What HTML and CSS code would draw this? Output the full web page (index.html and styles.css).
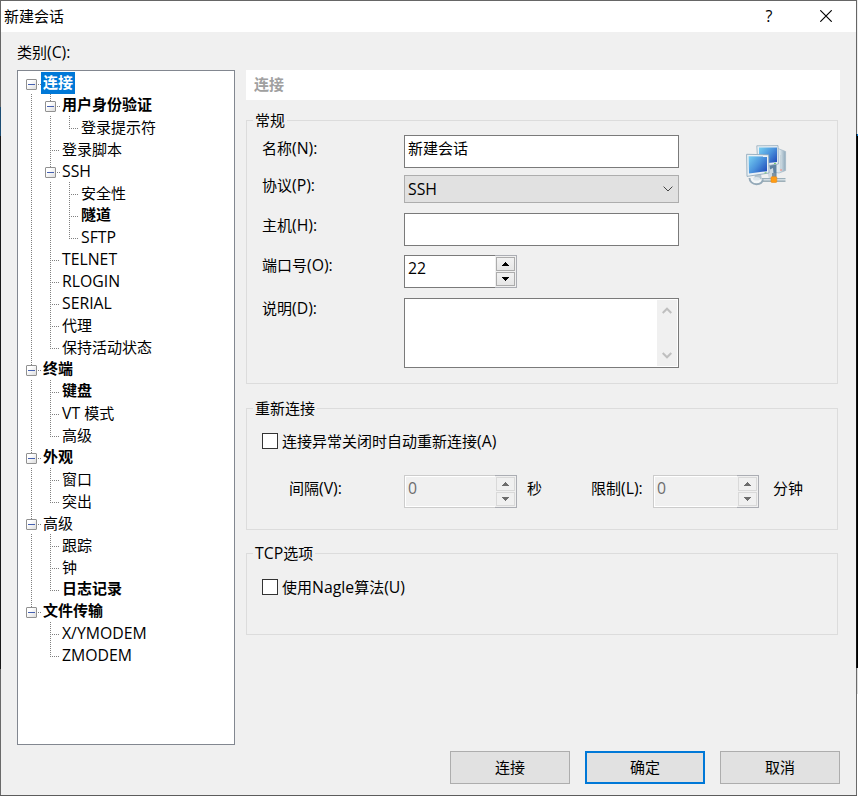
FILE: index.html
```html
<!DOCTYPE html>
<html lang="zh-CN">
<head>
<meta charset="utf-8">
<title>新建会话</title>
<link rel="stylesheet" href="styles.css">
</head>
<body>
<div class="frame">
<div class="window">
  <header class="titlebar">
    <span class="title">新建会话</span>
    <span class="help">?</span>
    <svg class="close" width="12" height="12" viewBox="0 0 12 12"><path d="M0.3 0.3L11.7 11.7M11.7 0.3L0.3 11.7" stroke="#000" stroke-width="1.15" fill="none"/></svg>
  </header>
  <div class="content">
    <aside class="side">
      <div class="caption">类别<span class="lat">(C):</span></div>
      <div class="tree" id="tree"></div>
    </aside>
    <main class="main">
      <h1 class="page-title">连接</h1>
      <section class="group general">
        <h2>常规</h2>
        <div class="form">
          <div class="row r-name"><label>名称<span class="lat">(N):</span></label><div class="input">新建会话</div></div>
          <div class="row r-proto"><label>协议<span class="lat">(P):</span></label><div class="select"><span class="lat">SSH</span><svg width="10" height="6" viewBox="0 0 10 6"><path d="M0.6 0.6L5 5L9.4 0.6" stroke="#444" stroke-width="1" fill="none"/></svg></div></div>
          <div class="row r-host"><label>主机<span class="lat">(H):</span></label><div class="input"></div></div>
          <div class="row r-port"><label>端口号<span class="lat">(O):</span></label>
            <div class="spin"><span class="val lat">22</span><span class="btns"><i><svg width="7" height="4"><path d="M3 0h1v1h1v1h1v1h1v1H0V3h1V2h1V1h1z"/></svg></i><i><svg width="7" height="4"><path d="M0 0h7v1H6v1H5v1H4v1H3V3H2V2H1V1H0z"/></svg></i></span></div></div>
          <div class="row r-desc"><label>说明<span class="lat">(D):</span></label>
            <div class="textarea"><div class="scroll">
              <svg width="10" height="7" viewBox="0 0 10 7"><path d="M0.7 6L5 1.7L9.3 6" stroke="#bfbfbf" stroke-width="2" fill="none"/></svg>
              <svg width="10" height="7" viewBox="0 0 10 7"><path d="M0.7 1L5 5.3L9.3 1" stroke="#bfbfbf" stroke-width="2" fill="none"/></svg>
            </div></div></div>
        </div>
        <svg class="net-icon" width="42" height="42" viewBox="0 0 42 42">
          <defs>
            <linearGradient id="scr" x1="0" y1="0.1" x2="1" y2="0.9"><stop offset="0" stop-color="#74cbf0"/><stop offset="0.5" stop-color="#4a92dc"/><stop offset="1" stop-color="#1f49b8"/></linearGradient>
            <linearGradient id="tower" x1="0" y1="0" x2="1" y2="0"><stop offset="0" stop-color="#f4f8fa"/><stop offset="0.55" stop-color="#d9e4ea"/><stop offset="1" stop-color="#8fa9bb"/></linearGradient>
            <linearGradient id="pipe" x1="0" y1="0" x2="0" y2="1"><stop offset="0" stop-color="#8199a6"/><stop offset="0.45" stop-color="#dfe8ec"/><stop offset="1" stop-color="#748d9a"/></linearGradient>
          </defs>
          <path d="M32 3.5L39.6 6.5V25.5L33 28L27 27V5z" fill="url(#tower)" stroke="#a3b8c6" stroke-width="0.7"/>
          <path d="M34.5 10v14" stroke="#c6d3db" stroke-width="1"/>
          <circle cx="35" cy="25" r="0.8" fill="#ff7a6a"/>
          <path d="M23 19h7.5v14h-5z" fill="#5f83a2"/>
          <path d="M21 26l6-3 1 11h-5z" fill="#cfdae1"/>
          <path d="M10.8 0.8L32 0.6L32.4 19L12 22z" fill="#e8eff4" stroke="#93abbd" stroke-width="0.8"/>
          <path d="M13 2.4H31V17L13 19z" fill="url(#scr)"/>
          <path d="M16 33h23.5v3.8H15z" fill="url(#pipe)"/>
          <path d="M9 29h6l1 6H8z" fill="#b4c4ce"/>
          <path d="M3.5 33c0 3.5 3 6.2 7 6.2s6-2.2 6.4-4.8" fill="#f4f7f8" stroke="#94a9b8" stroke-width="1.9"/>
          <ellipse cx="10.5" cy="33.8" rx="3.6" ry="1.8" fill="#dce5ea"/>
          <path d="M0.6 9.3L22.6 9.8L23 28L1 31.4z" fill="#eaf1f5" stroke="#93abbd" stroke-width="0.9"/>
          <path d="M2.6 11.2L21 11.6V26.2L3 28.6z" fill="url(#scr)"/>
          <path d="M18.5 28l2-.3" stroke="#6ac968" stroke-width="1"/>
          <path d="M28 18.6l2-.3" stroke="#6ac968" stroke-width="1"/>
          <rect x="26" y="28" width="3.6" height="4" fill="#7f93a0"/>
          <rect x="25" y="31.7" width="5.8" height="5.8" rx="1" fill="#ff9c13" stroke="#e68a1a" stroke-width="0.6"/>
        </svg>
      </section>
      <section class="group reconnect">
        <h2>重新连接</h2>
        <div class="check"><b></b><span>连接异常关闭时自动重新连接<span class="lat">(A)</span></span></div>
        <div class="timing">
          <label class="t-int">间隔<span class="lat">(V):</span></label>
          <div class="spin off"><span class="val lat">0</span><span class="btns"><i><svg width="7" height="4"><path d="M3 0h1v1h1v1h1v1h1v1H0V3h1V2h1V1h1z"/></svg></i><i><svg width="7" height="4"><path d="M0 0h7v1H6v1H5v1H4v1H3V3H2V2H1V1H0z"/></svg></i></span></div>
          <span class="t-sec">秒</span>
          <label class="t-lim">限制<span class="lat">(L):</span></label>
          <div class="spin off short"><span class="val lat">0</span><span class="btns"><i><svg width="7" height="4"><path d="M3 0h1v1h1v1h1v1h1v1H0V3h1V2h1V1h1z"/></svg></i><i><svg width="7" height="4"><path d="M0 0h7v1H6v1H5v1H4v1H3V3H2V2H1V1H0z"/></svg></i></span></div>
          <span class="t-min">分钟</span>
        </div>
      </section>
      <section class="group tcp">
        <h2><span class="lat">TCP</span>选项</h2>
        <div class="check"><b></b><span>使用<span class="lat">Nagle</span>算法<span class="lat">(U)</span></span></div>
      </section>
      <footer class="actions"><button>连接</button><button class="default">确定</button><button>取消</button></footer>
    </main>
  </div>
</div>
</div>
<script src="tree.js"></script>
</body>
</html>
```
FILE: tree.js
```js
// Guide cells: x = first root, r = middle root, z = last root, s = nested expander,
// v = vertical line, t = branch, l = last branch, n = empty.
const rows = [
  ["x", "连接", "bold selected"],
  ["vs", "用户身份验证", "bold"],
  ["vvl", "登录提示符"],
  ["vt", "登录脚本"],
  ["vs", "SSH"],
  ["vvt", "安全性"],
  ["vvt", "隧道", "bold"],
  ["vvl", "SFTP"],
  ["vt", "TELNET"],
  ["vt", "RLOGIN"],
  ["vt", "SERIAL"],
  ["vt", "代理"],
  ["vl", "保持活动状态"],
  ["r", "终端", "bold"],
  ["vt", "键盘", "bold"],
  ["vt", "VT 模式"],
  ["vl", "高级"],
  ["r", "外观", "bold"],
  ["vt", "窗口"],
  ["vl", "突出"],
  ["r", "高级"],
  ["vt", "跟踪"],
  ["vt", "钟"],
  ["vl", "日志记录", "bold"],
  ["z", "文件传输", "bold"],
  ["nt", "X/YMODEM"],
  ["nl", "ZMODEM"]
];
document.getElementById("tree").innerHTML = rows.map(([cells, text, cls = ""]) =>
  '<div class="node ' + cls + '">' +
  [...cells].map(c => '<span class="cell c-' + c + '">' + ("xrzs".includes(c) ? '<i class="box"></i>' : "") + "</span>").join("") +
  '<span class="text">' + text.replace(/[A-Z\/]+ ?/, '<span class="lat">$&</span>') + "</span></div>").join("");
```
FILE: styles.css
```css
* { box-sizing: border-box; }
body {
  margin: 0;
  width: 858px;
  height: 796px;
  overflow: hidden;
  background: linear-gradient(#eee 134px, #0078d7 134px, #0078d7 136px, #000 136px, #000 668px, #ddd 668px, #ddd 694px, #fff 694px);
  font: 15px/22px "Open Sans", "Noto Sans CJK SC", sans-serif;
  color: #000;
}
.frame {
  width: 857px;
  height: 796px;
  padding: 1px;
  background:
    linear-gradient(#666, #666) top / 100% 1px no-repeat,
    linear-gradient(#5c5c5c, #5c5c5c) bottom / 100% 1px no-repeat,
    linear-gradient(#666 107px, #1c4c72 107px, #1c4c72 136px, #1a1a1a 136px, #1a1a1a 669px, #6a6a6a 669px) left / 1px 100% no-repeat,
    linear-gradient(#666 134px, #111 134px, #111 668px, #6a6a6a 668px) right / 1px 100% no-repeat;
}
.window { height: 794px; background: #f0f0f0; }
.lat { font-size: 15.8px; line-height: 1; }
.titlebar {
  height: 31px;
  background: #fff;
  display: flex;
  align-items: center;
  padding: 0 24px 1px 3px;
}
.title { flex: 1; padding-bottom: 1px; }
.help { width: 10px; margin-right: 46px; font-size: 16px; text-align: center; }
.content { display: flex; padding: 0 16px; }
.side { width: 218px; }
.caption { padding-top: 9px; height: 38px; }
.tree {
  height: 675px;
  border: 1px solid #828790;
  background: #fff;
  padding: 1px 0 0 4px;
}
.node { display: flex; height: 22px; }
.cell {
  --dot: #808080;
  width: 19px;
  height: 22px;
  flex: none;
  background-repeat: no-repeat;
  --v: repeating-linear-gradient(to bottom, var(--dot) 0 1px, transparent 1px 2px);
  --h: repeating-linear-gradient(to right, var(--dot) 0 1px, transparent 1px 2px);
}
.c-v { background-image: var(--v); background-size: 1px 22px; background-position: 9px 0; }
.c-t { background-image: var(--v), var(--h); background-size: 1px 22px, 9px 1px; background-position: 9px 0, 9px 12px; }
.c-l { background-image: var(--v), var(--h); background-size: 1px 12px, 9px 1px; background-position: 9px 0, 9px 12px; }
.c-r, .c-s, .c-z { background-image: var(--v), var(--h); background-size: 1px 7px, 3px 1px; background-position: 9px 0, 16px 12px; }
.c-x { background-image: var(--h); background-size: 3px 1px; background-position: 16px 12px; }
.box {
  display: block;
  width: 11px;
  height: 11px;
  margin: 7px 0 0 4px;
  border: 1px solid #919191;
  border-radius: 1px;
  background: linear-gradient(#4560b0, #4560b0) center / 7px 1px no-repeat, linear-gradient(135deg, #fff 30%, #dcdcdc);
}
.text { padding: 1px 2px 0; line-height: 21px; white-space: nowrap; }
.bold .text { padding-top: 0; font-weight: 700; }
.selected .text { background: #0078d7; color: #fff; }

.main { width: 594px; margin-left: 11px; padding-top: 38px; }
.page-title {
  margin: 0 0 20px;
  height: 30px;
  padding: 0 8px;
  background: #fff;
  color: #a0a0a0;
  font-size: 15px;
  font-weight: 700;
  line-height: 29px;
}
.group { width: 592px; border: 1px solid #dcdcdc; }
.group h2 {
  width: fit-content;
  margin: -12px 0 0 6px;
  padding: 0 2px;
  background: #f0f0f0;
  font-size: 15px;
  font-weight: 400;
  line-height: 22px;
  height: 22px;
}
.general { height: 264px; display: grid; grid-template-columns: 499px 1fr; grid-template-rows: 10px 1fr; }
.general h2 { grid-column: 1 / 3; }
.form { padding: 4px 0 0 15px; }
.row { display: flex; }
.row label { width: 142px; margin-top: -1px; }
.r-name { height: 40px; }
.r-name label { padding-top: 3px; }
.r-proto { height: 38px; }
.r-host { height: 42px; }
.r-host label { padding-top: 2px; }
.r-port { height: 43px; }
.input, .textarea, .select {
  width: 275px;
  height: 33px;
  border: 1px solid #7a7a7a;
  background: #fff;
  padding: 1px 3px;
}
.select {
  height: 28px;
  border-color: #adadad;
  background: #e1e1e1;
  display: flex;
  align-items: center;
  justify-content: space-between;
  padding: 0 5px 0 3px;
}
.select .lat { padding-top: 2px; }
.textarea { height: 70px; padding: 1px; display: flex; justify-content: flex-end; }
.scroll {
  width: 20px;
  background: #f0f0f0;
  display: flex;
  flex-direction: column;
  align-items: center;
  justify-content: space-between;
  padding: 7px 1px 7px 0;
}
.spin { display: flex; width: 113px; height: 33px; background: #fff; }
.val { flex: 1; border: 1px solid #7a7a7a; border-right: 0; padding: 1px 3px; line-height: 22px; }
.btns {
  width: 22px;
  border: 1px solid #abadb3;
  border-left: 0;
  padding: 1px;
  display: flex;
  flex-direction: column;
  gap: 1px;
  background: #f0f0f0;
}
.btns i {
  flex: 1;
  border: 1px solid #acacac;
  background: linear-gradient(#f2f2f2, #e6e6e6);
  display: flex;
  align-items: center;
  justify-content: center;
}
.off { background: #f0f0f0; }
.off .val { border-color: #ccc; color: #6d6d6d; box-shadow: inset 1px 1px #fff, inset 0 -1px #fff; }
.off i { border-color: #d9d9d9; background: #f0f0f0; }
.off svg { fill: #6d6d6d; }
.short { width: 106px; }
.net-icon { margin: 14px 0 0; }
.reconnect { height: 122px; margin-top: 24px; }
.tcp { height: 82px; margin-top: 23px; }
.check { display: flex; align-items: center; height: 22px; margin: 12px 0 0 15px; }
.reconnect .check { margin-top: 11px; }
.check b { width: 16px; height: 16px; border: 1px solid #333; background: #fff; margin-right: 4px; }
.timing { display: flex; margin: 23px 0 0 42px; }
.timing label, .timing > span { padding-top: 2px; }
.t-int { width: 115px; }
.t-sec { width: 74px; padding-left: 10px; }
.t-lim { width: 62px; }
.t-min { padding-left: 14px; }
.actions { display: flex; gap: 15px; margin: 116px 0 0 204px; }
button {
  width: 120px;
  height: 33px;
  padding: 0 0 2px;
  border: 1px solid #adadad;
  background: #e1e1e1;
  font: inherit;
  color: #000;
}
.default { border: 2px solid #0078d7; }
```
